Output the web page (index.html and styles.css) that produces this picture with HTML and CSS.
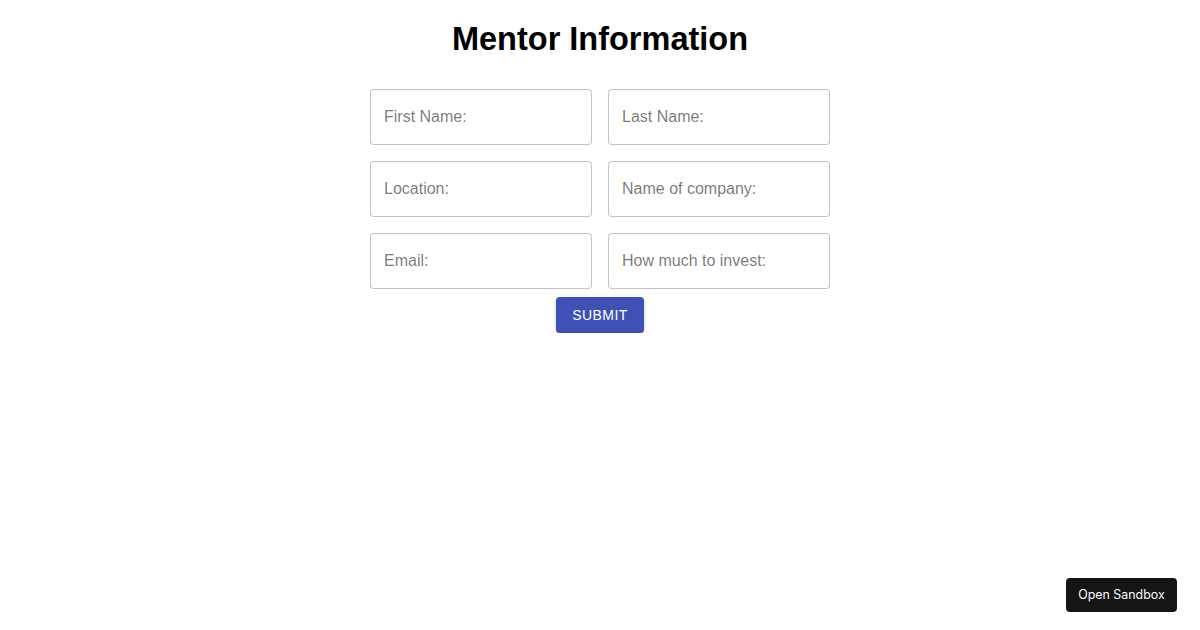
FILE: index.html
```html
<!DOCTYPE html>
<html lang="en">
<head>
<meta charset="utf-8">
<title>Mentor Information</title>
<link rel="stylesheet" href="styles.css">
</head>
<body>
<div class="page">
  <h1 class="title">Mentor Information</h1>
  <form class="form">
    <div class="grid">
      <div class="field"><input class="input" type="text" placeholder="First Name:"></div>
      <div class="field"><input class="input" type="text" placeholder="Last Name:"></div>
      <div class="field"><input class="input" type="text" placeholder="Location:"></div>
      <div class="field"><input class="input" type="text" placeholder="Name of company:"></div>
      <div class="field"><input class="input" type="text" placeholder="Email:"></div>
      <div class="field"><input class="input" type="text" placeholder="How much to invest:"></div>
    </div>
    <button class="submit" type="button">Submit</button>
  </form>
</div>
<button class="sandbox" type="button">Open Sandbox</button>
</body>
</html>
```
FILE: styles.css
```css
html, body {
  margin: 0;
  padding: 0;
  background: #ffffff;
}
body {
  font-family: "Liberation Sans", Arial, sans-serif;
}
.page {
  display: flex;
  flex-direction: column;
  align-items: center;
}
.title {
  font-family: "Liberation Sans", Arial, sans-serif;
  font-size: 32.5px;
  font-weight: 700;
  line-height: 37px;
  margin: 21px 0 0 0;
  color: #000;
}
.form {
  display: flex;
  flex-direction: column;
  align-items: center;
  margin-top: 31px;
}
.grid {
  display: grid;
  grid-template-columns: 222px 222px;
  column-gap: 16px;
  row-gap: 16px;
}
.field {
  display: flex;
}
.input {
  box-sizing: border-box;
  width: 222px;
  height: 56px;
  border: 1px solid rgba(0, 0, 0, 0.23);
  border-radius: 4px;
  padding: 0 14px 0 13px;
  font-family: "Liberation Sans", Arial, sans-serif;
  font-size: 16px;
  color: rgba(0, 0, 0, 0.87);
  background: #fff;
  outline: none;
}
.input::placeholder {
  color: rgba(0, 0, 0, 0.54);
  opacity: 1;
}
.submit {
  margin-top: 8px;
  height: 36px;
  padding: 6px 16px;
  border: none;
  border-radius: 4px;
  background: #3f51b5;
  color: #fff;
  font-family: "Liberation Sans", Arial, sans-serif;
  font-size: 14px;
  font-weight: 400;
  letter-spacing: 0.02857em;
  text-transform: uppercase;
  line-height: 24px;
  box-shadow: 0 3px 1px -2px rgba(0,0,0,0.2), 0 2px 2px 0 rgba(0,0,0,0.14), 0 1px 5px 0 rgba(0,0,0,0.12);
  cursor: pointer;
}
.sandbox {
  position: fixed;
  right: 23px;
  bottom: 18px;
  width: 111px;
  height: 34px;
  border: none;
  border-radius: 4px;
  background: #151515;
  color: #fff;
  font-family: Inter, "Liberation Sans", Arial, sans-serif;
  font-size: 12.4px;
  font-weight: 400;
  line-height: 33px;
  padding: 0 0 1px 0;
}
```
